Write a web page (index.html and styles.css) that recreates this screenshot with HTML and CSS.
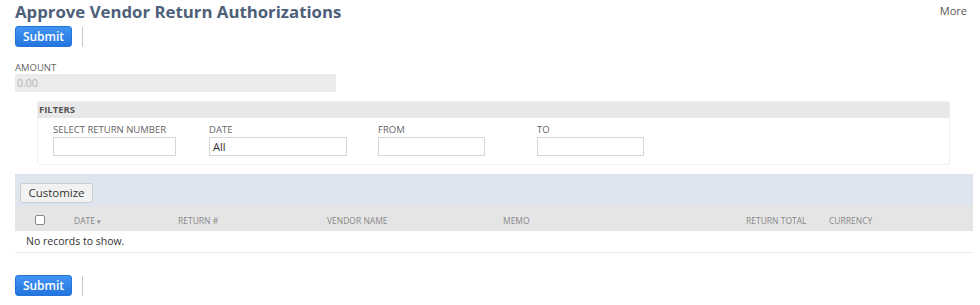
FILE: index.html
```html
<!DOCTYPE html>
<html>
<head>
<meta charset="utf-8">
<link rel="stylesheet" href="styles.css">
</head>
<body>
<div class="page">
  <div class="header">
    <h1 class="title">Approve Vendor Return Authorizations</h1>
    <span class="more">More</span>
  </div>
  <div class="toolbar">
    <button class="btn-primary">Submit</button>
    <span class="sep"></span>
  </div>
  <div class="amount">
    <div class="label">AMOUNT</div>
    <div class="amount-field">0.00</div>
  </div>
  <div class="filters">
    <div class="filters-head">FILTERS</div>
    <div class="filters-body">
      <div class="field f1"><div class="label">SELECT RETURN NUMBER</div><div class="input"></div></div>
      <div class="field f2"><div class="label">DATE</div><div class="input">All</div></div>
      <div class="field f3"><div class="label">FROM</div><div class="input"></div></div>
      <div class="field f4"><div class="label">TO</div><div class="input"></div></div>
    </div>
  </div>
  <div class="list">
    <div class="band"><button class="btn-custom">Customize</button></div>
    <div class="thead">
      <div class="c c0"><span class="checkbox"></span></div>
      <div class="c">DATE <span class="caret">&#9662;</span></div>
      <div class="c">RETURN #</div>
      <div class="c">VENDOR NAME</div>
      <div class="c">MEMO</div>
      <div class="c">RETURN TOTAL</div>
      <div class="c">CURRENCY</div>
    </div>
    <div class="empty">No records to show.</div>
  </div>
  <div class="toolbar bottom">
    <button class="btn-primary">Submit</button>
    <span class="sep"></span>
  </div>
</div>
</body>
</html>
```
FILE: styles.css
```css
html, body {
  margin: 0;
  padding: 0;
  background: #fff;
  font-family: "Open Sans", "Liberation Sans", sans-serif;
}
.page {
  padding: 0 13px 0 15px;
}
.header {
  display: flex;
  justify-content: space-between;
  align-items: flex-start;
  height: 20px;
}
.title {
  margin: 0;
  font-size: 16.8px;
  line-height: 23px;
  height: 20px;
  font-weight: 700;
  color: #4d5f79;
}
.more {
  font-size: 11px;
  line-height: 14px;
  color: #555;
  margin-top: 4px;
}
.toolbar {
  display: flex;
  align-items: center;
  margin-top: 6px;
  height: 21px;
}
.toolbar.bottom {
  margin-top: 22px;
}
.btn-primary {
  width: 57px;
  height: 21px;
  padding: 0;
  border: 1px solid #2373d8;
  border-radius: 3px;
  background: linear-gradient(#4094f2, #2475de);
  color: #fff;
  font-family: "Open Sans", "Liberation Sans", sans-serif;
  font-size: 12px;
  font-weight: 600;
  line-height: 19px;
}
.sep {
  width: 1px;
  height: 20px;
  background: #c8c8c8;
  margin-left: 10px;
}
.amount {
  margin-top: 15px;
}
.label {
  font-size: 9.5px;
  line-height: 12px;
  color: #666;
  text-transform: uppercase;
}
.amount-field {
  height: 18px;
  background: #ebebeb;
  color: #b3b3b3;
  font-size: 10.5px;
  line-height: 18px;
  padding-left: 2px;
  box-sizing: border-box;
  width: 321px;
}
.filters {
  margin: 9px 0 0 22px;
  width: 913px;
  border: 1px solid #efefef;
  border-radius: 3px;
  box-sizing: border-box;
}
.filters-head {
  height: 16px;
  background: #e8e8e8;
  font-size: 9.5px;
  font-weight: 700;
  color: #555;
  line-height: 16px;
  padding-left: 1px;
}
.filters-body {
  display: flex;
  padding: 6px 0 8px 15px;
}
.field .label {
  margin-bottom: 1px;
}
.input {
  height: 19px;
  border: 1px solid #d6d6d6;
  box-sizing: border-box;
  font-size: 11px;
  line-height: 17px;
  color: #333;
  padding-left: 3px;
}
.f1 { width: 123px; margin-right: 33px; }
.f2 { width: 138px; margin-right: 31px; }
.f3 { width: 107px; margin-right: 52px; }
.f4 { width: 107px; }
.list {
  margin-top: 9px;
  width: 958px;
}
.band {
  height: 32px;
  background: #dfe5ee;
  padding: 6px 0 0 5px;
  box-sizing: border-box;
}
.btn-custom {
  height: 20px;
  width: 73px;
  padding: 0;
  border: 1px solid #cdcdcd;
  border-radius: 3px;
  background: #f2f2f2;
  color: #333;
  font-family: "Open Sans", "Liberation Sans", sans-serif;
  font-size: 11.5px;
  line-height: 18px;
}
.thead {
  display: grid;
  grid-template-columns: 59px 104px 149px 176px 243px 83px 1fr;
  height: 25px;
  background: #e5e5e5;
  align-items: center;
}
.c {
  font-size: 8.5px;
  color: #888;
  text-transform: uppercase;
  padding-top: 3px;
}
.c0 {
  padding-left: 20px;
  padding-top: 2px;
}
.checkbox {
  display: block;
  width: 10px;
  height: 10px;
  border: 1px solid #8a8a8a;
  border-radius: 2px;
  background: #fff;
  box-sizing: border-box;
}
.caret {
  font-size: 7px;
}
.empty {
  height: 21px;
  border-bottom: 1px solid #e8e8e8;
  font-size: 10.5px;
  line-height: 20px;
  color: #333;
  padding-left: 11px;
}
```
